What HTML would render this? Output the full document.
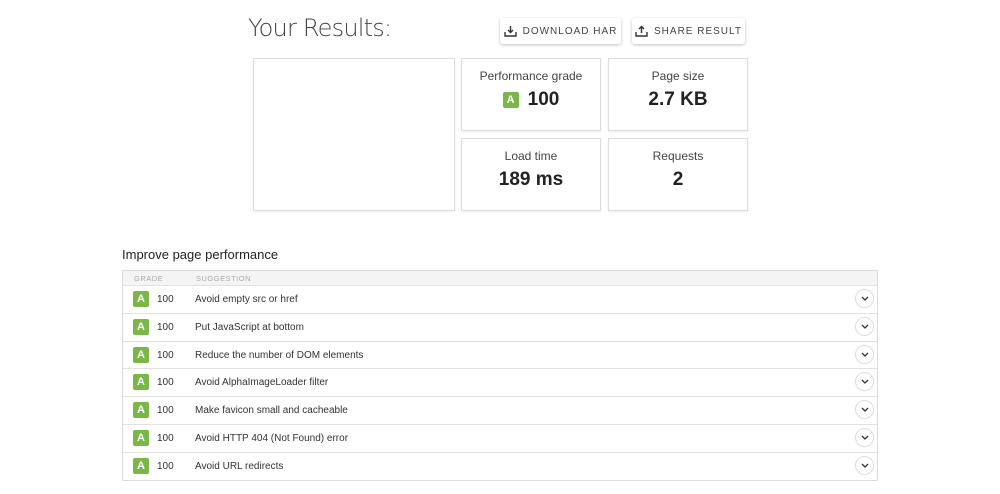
<!DOCTYPE html>
<html><head><style>
body{margin:0;width:1000px;height:494px;background:#fff;font-family:"Liberation Sans",sans-serif;position:relative;overflow:hidden;color:#222}
.abs{position:absolute}
.title{left:248px;top:14px;font-size:24px;font-family:"DejaVu Sans","Liberation Sans",sans-serif;font-weight:200;color:#444;letter-spacing:-0.8px}
.btn{top:18px;height:26px;background:#fff;border-radius:3px;box-shadow:0 1px 3px rgba(0,0,0,.25);font-size:10px;letter-spacing:1px;color:#444;display:flex;align-items:center;justify-content:center;gap:6px}
.card{border:1px solid #ddd;box-shadow:0 1px 2px rgba(0,0,0,.08);text-align:center;box-sizing:border-box}
.lbl{font-size:12px;color:#444;margin-top:10px}
.val{font-size:19px;font-weight:bold;margin-top:6px;display:flex;justify-content:center;align-items:center;gap:9px}
.g{display:inline-flex;width:16px;height:16px;background:#7ab648;color:#fff;font-size:11px;font-weight:bold;align-items:center;justify-content:center;border-radius:2px}
.tbl{left:122px;top:270px;width:756px;border:1px solid #ddd;box-sizing:border-box}
.hd{height:14px;background:#f4f4f4;font-size:7.5px;color:#aaa;letter-spacing:.5px;position:relative;border-bottom:1px solid #e2e2e2}
.row{height:26.8px;border-bottom:1px solid #e2e2e2;position:relative;font-size:10px;color:#333}
.row:last-child{border-bottom:none}
.row .g{position:absolute;left:10px;top:5px}
.row .n{position:absolute;left:34px;top:8px}
.row .s{position:absolute;left:72px;top:8px}
.row .c{position:absolute;right:3px;top:3px;width:19px;height:19px;border:1px solid #ddd;border-radius:50%;box-sizing:border-box;display:flex;align-items:center;justify-content:center}
</style></head><body>
<div class="abs title">Your Results:</div>
<div class="abs btn" style="left:500px;width:121px"><svg width="13" height="12" viewBox="0 0 13 12"><path d="M6.5 1v6M4 5l2.5 2.5L9 5M1 7v4h11V7" fill="none" stroke="#333" stroke-width="1.4"/></svg>DOWNLOAD HAR</div>
<div class="abs btn" style="left:632px;width:113px"><svg width="13" height="12" viewBox="0 0 13 12"><path d="M6.5 8V2M4 4l2.5-2.5L9 4M1 7v4h11V7" fill="none" stroke="#333" stroke-width="1.4"/></svg>SHARE RESULT</div>
<div class="abs card" style="left:253px;top:58px;width:202px;height:153px"></div>
<div class="abs card" style="left:461px;top:58px;width:140px;height:73px"><div class="lbl">Performance grade</div><div class="val"><span class="g">A</span>100</div></div>
<div class="abs card" style="left:608px;top:58px;width:140px;height:73px"><div class="lbl">Page size</div><div class="val">2.7 KB</div></div>
<div class="abs card" style="left:461px;top:138px;width:140px;height:73px"><div class="lbl">Load time</div><div class="val">189 ms</div></div>
<div class="abs card" style="left:608px;top:138px;width:140px;height:73px"><div class="lbl">Requests</div><div class="val">2</div></div>
<div class="abs" style="left:122px;top:247px;font-size:13px;color:#222">Improve page performance</div>
<div class="abs tbl">
<div class="hd"><span style="position:absolute;left:11px;top:3px">GRADE</span><span style="position:absolute;left:73px;top:3px">SUGGESTION</span></div>
<div class="row"><span class="g">A</span><span class="n">100</span><span class="s">Avoid empty src or href</span><span class="c"><svg width="8" height="5"><path d="M1 1l3 3 3-3" fill="none" stroke="#333" stroke-width="1.3"/></svg></span></div>
<div class="row"><span class="g">A</span><span class="n">100</span><span class="s">Put JavaScript at bottom</span><span class="c"><svg width="8" height="5"><path d="M1 1l3 3 3-3" fill="none" stroke="#333" stroke-width="1.3"/></svg></span></div>
<div class="row"><span class="g">A</span><span class="n">100</span><span class="s">Reduce the number of DOM elements</span><span class="c"><svg width="8" height="5"><path d="M1 1l3 3 3-3" fill="none" stroke="#333" stroke-width="1.3"/></svg></span></div>
<div class="row"><span class="g">A</span><span class="n">100</span><span class="s">Avoid AlphaImageLoader filter</span><span class="c"><svg width="8" height="5"><path d="M1 1l3 3 3-3" fill="none" stroke="#333" stroke-width="1.3"/></svg></span></div>
<div class="row"><span class="g">A</span><span class="n">100</span><span class="s">Make favicon small and cacheable</span><span class="c"><svg width="8" height="5"><path d="M1 1l3 3 3-3" fill="none" stroke="#333" stroke-width="1.3"/></svg></span></div>
<div class="row"><span class="g">A</span><span class="n">100</span><span class="s">Avoid HTTP 404 (Not Found) error</span><span class="c"><svg width="8" height="5"><path d="M1 1l3 3 3-3" fill="none" stroke="#333" stroke-width="1.3"/></svg></span></div>
<div class="row"><span class="g">A</span><span class="n">100</span><span class="s">Avoid URL redirects</span><span class="c"><svg width="8" height="5"><path d="M1 1l3 3 3-3" fill="none" stroke="#333" stroke-width="1.3"/></svg></span></div>
</div>
</body></html>
